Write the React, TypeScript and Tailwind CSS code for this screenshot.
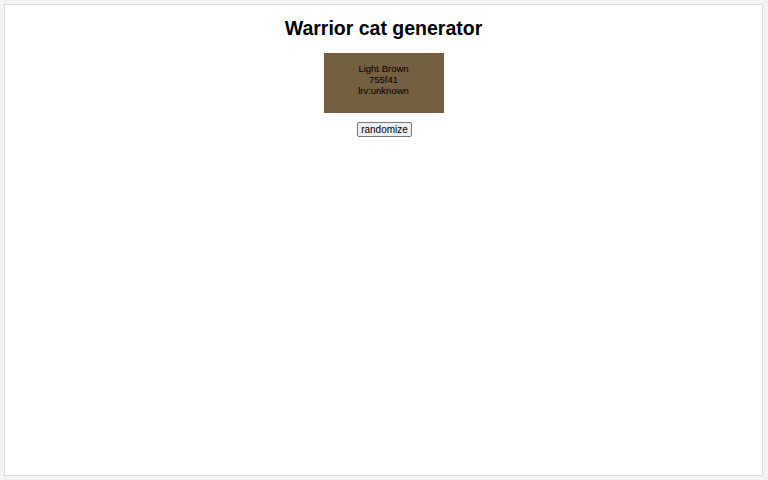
export default function App() {
  return (
    <div className="h-[480px] w-[768px] bg-[#f3f3f3] pb-[4px] pl-[4px] pr-[5px] pt-[4px] font-['Liberation_Sans',Arial,sans-serif]">
      <div className="flex h-[472px] flex-col items-center border border-[#dcdcdc] bg-white">
        <h1 className="mt-[12px] text-[19.5px] font-bold leading-[22px] text-black">Warrior cat generator</h1>
        <div className="mt-[14px] flex h-[60px] w-[120px] flex-col items-center bg-[#755f41] pt-[10px] text-[9.5px] leading-[11px] text-black">
          <span>Light Brown</span>
          <span>755f41</span>
          <span>lrv:unknown</span>
        </div>
        <button className="ml-[2px] mt-[9px] h-[15px] rounded-[2px] border border-[#767676] bg-[#efefef] px-[3px] text-[10px] leading-[13px] text-black">
          randomize
        </button>
      </div>
    </div>
  );
}
